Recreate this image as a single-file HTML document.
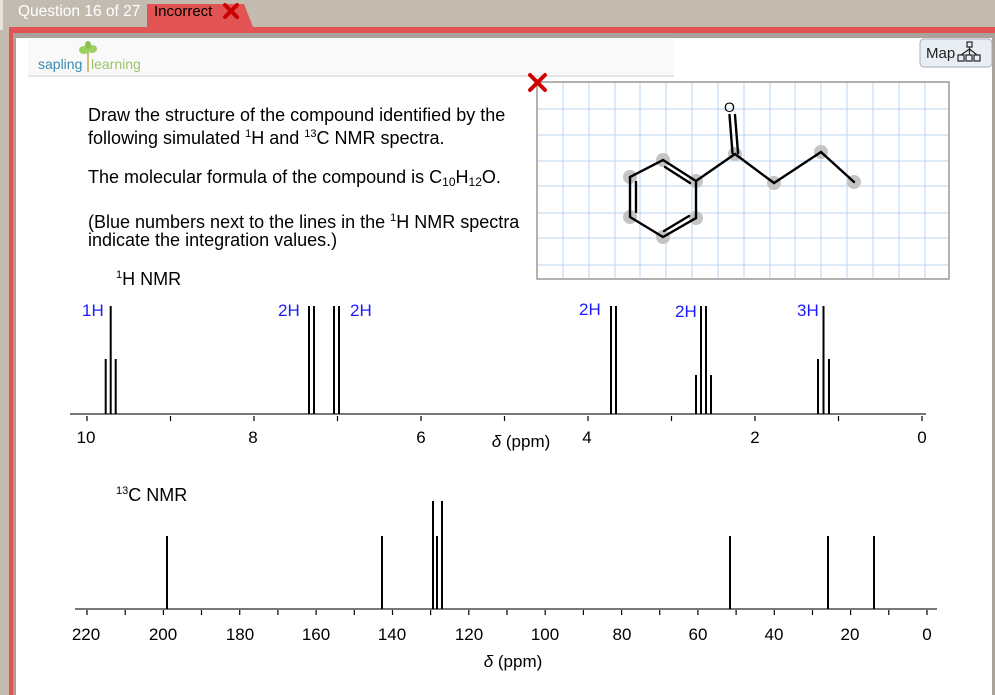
<!DOCTYPE html>
<html><head><style>
html,body{margin:0;padding:0;width:995px;height:695px;overflow:hidden;background:#fff}
svg{display:block;font-family:"Liberation Sans",Arial,sans-serif}
</style></head><body>
<svg width="995" height="695" viewBox="0 0 995 695" xmlns="http://www.w3.org/2000/svg">
<rect x="0" y="0" width="995" height="695" fill="#c3bbaf"/>
<rect x="0" y="0" width="3" height="30" fill="#e8e4de"/>
<text x="18" y="16" font-size="15.5" fill="#fff">Question 16 of 27</text>
<polygon points="147,4 244,4 253,27 147,27" fill="#e25454"/>
<text x="154" y="16" font-size="15" fill="#000">Incorrect</text>
<g stroke="#c00" stroke-width="4" stroke-linecap="round"><line x1="225" y1="5" x2="237" y2="17"/><line x1="237" y1="5" x2="225" y2="17"/></g>
<rect x="9" y="27" width="986" height="668" fill="#e25454"/>
<rect x="13" y="33" width="982" height="662" fill="#a9a29a"/>
<rect x="16" y="38" width="976" height="657" fill="#fff"/>
<rect x="28" y="39" width="646" height="36" fill="#f9f9f9"/>
<line x1="28" y1="76" x2="674" y2="76" stroke="#e6e6e6" stroke-width="2"/>
<text x="38" y="69" font-size="14" fill="#3a8ab0">sapling</text>
<text x="91" y="69" font-size="14" fill="#9cc36a">learning</text>
<line x1="88" y1="52" x2="88" y2="72" stroke="#c8a850" stroke-width="1.5"/>
<ellipse cx="84" cy="50" rx="5" ry="4" fill="#9cd060"/><ellipse cx="92" cy="49" rx="5" ry="4" fill="#9cd060"/><ellipse cx="88" cy="45" rx="3" ry="4" fill="#8cc050"/>
<rect x="920" y="39" width="72" height="28" rx="4" fill="#e9eef5" stroke="#aab"/>
<text x="926" y="58" font-size="15" fill="#222">Map</text>
<g fill="none" stroke="#222" stroke-width="1.2"><rect x="967" y="42" width="5" height="5"/><rect x="958" y="55" width="6" height="6"/><rect x="966" y="55" width="6" height="6"/><rect x="974" y="55" width="6" height="6"/><path d="M969.5 47 V51 M961 55 L969.5 49 L977 55 M969.5 51 V55"/></g>
<g font-size="18" fill="#000">
<text x="88" y="121">Draw the structure of the compound identified by the</text>
<text x="88" y="144">following simulated <tspan font-size="11" dy="-7">1</tspan><tspan dy="7">H and </tspan><tspan font-size="11" dy="-7">13</tspan><tspan dy="7">C NMR spectra.</tspan></text>
<text x="88" y="183">The molecular formula of the compound is C<tspan font-size="12" dy="3">10</tspan><tspan dy="-3">H</tspan><tspan font-size="12" dy="3">12</tspan><tspan dy="-3">O.</tspan></text>
<text x="88" y="228">(Blue numbers next to the lines in the <tspan font-size="11" dy="-7">1</tspan><tspan dy="7">H NMR spectra</tspan></text>
<text x="88" y="246">indicate the integration values.)</text>
<text x="116" y="285"><tspan font-size="11" dy="-7">1</tspan><tspan dy="7">H NMR</tspan></text>
<text x="116" y="501"><tspan font-size="11" dy="-7">13</tspan><tspan dy="7">C NMR</tspan></text>
</g>
<rect x="537" y="82" width="412" height="197" fill="#fff" stroke="#999" stroke-width="1.5"/>
<g stroke="#b8d4f0" stroke-width="1">
<line x1="563" y1="83" x2="563" y2="278"/><line x1="589" y1="83" x2="589" y2="278"/><line x1="615" y1="83" x2="615" y2="278"/><line x1="640" y1="83" x2="640" y2="278"/><line x1="666" y1="83" x2="666" y2="278"/><line x1="692" y1="83" x2="692" y2="278"/><line x1="718" y1="83" x2="718" y2="278"/><line x1="744" y1="83" x2="744" y2="278"/><line x1="770" y1="83" x2="770" y2="278"/><line x1="795" y1="83" x2="795" y2="278"/><line x1="821" y1="83" x2="821" y2="278"/><line x1="847" y1="83" x2="847" y2="278"/><line x1="873" y1="83" x2="873" y2="278"/><line x1="899" y1="83" x2="899" y2="278"/><line x1="925" y1="83" x2="925" y2="278"/>
<line x1="538" y1="109" x2="948" y2="109"/><line x1="538" y1="135" x2="948" y2="135"/><line x1="538" y1="161" x2="948" y2="161"/><line x1="538" y1="186" x2="948" y2="186"/><line x1="538" y1="213" x2="948" y2="213"/><line x1="538" y1="238" x2="948" y2="238"/><line x1="538" y1="265" x2="948" y2="265"/>
</g>
<g fill="#c4c4c4">
<circle cx="663" cy="160" r="7"/><circle cx="696" cy="181" r="7"/><circle cx="696" cy="218" r="7"/><circle cx="663" cy="237" r="7"/><circle cx="630" cy="217" r="7"/><circle cx="630" cy="177" r="7"/><circle cx="735" cy="154" r="7"/><circle cx="774" cy="183" r="7"/><circle cx="821" cy="152" r="7"/><circle cx="854" cy="182" r="7"/>
</g>
<g stroke="#000" stroke-width="2.4" fill="none" stroke-linecap="round">
<path d="M663 160 L696 181 L696 218 L663 237 L630 217 L630 177 Z"/>
<path d="M665 167 L690 183 M689 216 L664 231 M636 182 L636 212"/>
<path d="M696 181 L735 154 L774 183 L821 152 L854 182"/>
<path d="M732.5 153 L729.5 115 M738 153 L735 115"/>
</g>
<text x="724" y="112" font-size="14" fill="#000">O</text>
<g stroke="#c00" stroke-width="4" stroke-linecap="round"><line x1="530" y1="75" x2="545" y2="90"/><line x1="545" y1="75" x2="530" y2="90"/></g>
<line x1="70" y1="414" x2="926" y2="414" stroke="#777" stroke-width="2"/>
<g stroke="#000" stroke-width="1.2">
<line x1="87" y1="416" x2="87" y2="421"/><line x1="170.5" y1="416" x2="170.5" y2="421"/><line x1="254" y1="416" x2="254" y2="421"/><line x1="337.5" y1="416" x2="337.5" y2="421"/><line x1="421" y1="416" x2="421" y2="421"/><line x1="504.5" y1="416" x2="504.5" y2="421"/><line x1="588" y1="416" x2="588" y2="421"/><line x1="671.5" y1="416" x2="671.5" y2="421"/><line x1="755" y1="416" x2="755" y2="421"/><line x1="838.5" y1="416" x2="838.5" y2="421"/><line x1="922" y1="416" x2="922" y2="421"/>
</g>
<g stroke="#000" stroke-width="2">
<line x1="105.7" y1="414" x2="105.7" y2="359"/><line x1="110.7" y1="414" x2="110.7" y2="306"/><line x1="115.7" y1="414" x2="115.7" y2="359"/>
<line x1="309" y1="414" x2="309" y2="306"/><line x1="314" y1="414" x2="314" y2="306"/>
<line x1="334" y1="414" x2="334" y2="306"/><line x1="339" y1="414" x2="339" y2="306"/>
<line x1="611" y1="414" x2="611" y2="306"/><line x1="616" y1="414" x2="616" y2="306"/>
<line x1="696" y1="414" x2="696" y2="375"/><line x1="701" y1="414" x2="701" y2="306"/><line x1="706" y1="414" x2="706" y2="306"/><line x1="711" y1="414" x2="711" y2="375"/>
<line x1="818" y1="414" x2="818" y2="359"/><line x1="823.5" y1="414" x2="823.5" y2="306"/><line x1="829" y1="414" x2="829" y2="359"/>
</g>
<g font-size="17" fill="#1a1aff">
<text x="82" y="316">1H</text><text x="278" y="316">2H</text><text x="350" y="316">2H</text><text x="579" y="315">2H</text><text x="675" y="317">2H</text><text x="797" y="316">3H</text>
</g>
<g font-size="17" fill="#000" text-anchor="middle">
<text x="86" y="443">10</text><text x="253" y="443">8</text><text x="421" y="443">6</text><text x="587" y="443">4</text><text x="755" y="443">2</text><text x="922" y="443">0</text>
<text x="521" y="447"><tspan font-style="italic">δ</tspan> (ppm)</text>
</g>
<line x1="75" y1="609" x2="937" y2="609" stroke="#777" stroke-width="2"/>
<g stroke="#000" stroke-width="1.2">
<line x1="87" y1="610" x2="87" y2="615"/><line x1="125.2" y1="610" x2="125.2" y2="615"/><line x1="163.4" y1="610" x2="163.4" y2="615"/><line x1="201.5" y1="610" x2="201.5" y2="615"/><line x1="239.7" y1="610" x2="239.7" y2="615"/><line x1="277.9" y1="610" x2="277.9" y2="615"/><line x1="316.1" y1="610" x2="316.1" y2="615"/><line x1="354.3" y1="610" x2="354.3" y2="615"/><line x1="392.5" y1="610" x2="392.5" y2="615"/><line x1="430.6" y1="610" x2="430.6" y2="615"/><line x1="468.8" y1="610" x2="468.8" y2="615"/><line x1="507" y1="610" x2="507" y2="615"/><line x1="545.2" y1="610" x2="545.2" y2="615"/><line x1="583.4" y1="610" x2="583.4" y2="615"/><line x1="621.6" y1="610" x2="621.6" y2="615"/><line x1="659.7" y1="610" x2="659.7" y2="615"/><line x1="697.9" y1="610" x2="697.9" y2="615"/><line x1="736.1" y1="610" x2="736.1" y2="615"/><line x1="774.3" y1="610" x2="774.3" y2="615"/><line x1="812.5" y1="610" x2="812.5" y2="615"/><line x1="850.6" y1="610" x2="850.6" y2="615"/><line x1="888.8" y1="610" x2="888.8" y2="615"/><line x1="927" y1="610" x2="927" y2="615"/>
</g>
<g stroke="#000" stroke-width="2">
<line x1="167" y1="609" x2="167" y2="536"/><line x1="382" y1="609" x2="382" y2="536"/>
<line x1="433" y1="609" x2="433" y2="501"/><line x1="437" y1="609" x2="437" y2="536"/><line x1="442" y1="609" x2="442" y2="501"/>
<line x1="730" y1="609" x2="730" y2="536"/><line x1="828" y1="609" x2="828" y2="536"/><line x1="874" y1="609" x2="874" y2="536"/>
</g>
<g font-size="17" fill="#000" text-anchor="middle">
<text x="86" y="640">220</text><text x="163" y="640">200</text><text x="240" y="640">180</text><text x="316" y="640">160</text><text x="392" y="640">140</text><text x="469" y="640">120</text><text x="545" y="640">100</text><text x="622" y="640">80</text><text x="698" y="640">60</text><text x="774" y="640">40</text><text x="850" y="640">20</text><text x="927" y="640">0</text>
<text x="513" y="667"><tspan font-style="italic">δ</tspan> (ppm)</text>
</g>
</svg>
</body></html>
